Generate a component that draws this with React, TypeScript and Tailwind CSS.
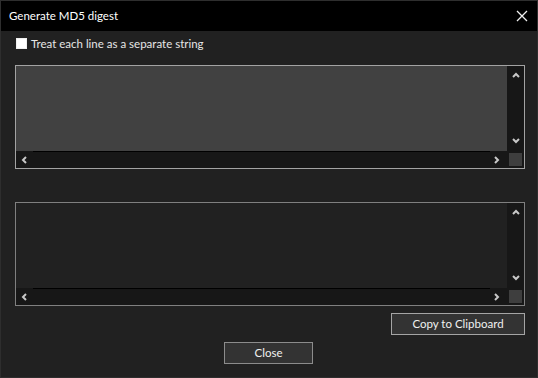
import React from "react";

type ArrowDir = "up" | "down" | "left" | "right";

const Chevron = ({ dir }: { dir: ArrowDir }) => {
    const points: Record<ArrowDir, string> = {
        up: "1,5 4,2 7,5",
        down: "1,2 4,5 7,2",
        left: "5,1 2,4 5,7",
        right: "2,1 5,4 2,7",
    };
    return (
        <svg width="8" height="8" viewBox="0 0 8 8" className="block">
            <polyline points={points[dir]} fill="none" stroke="#c8c8c8" strokeWidth="2" />
        </svg>
    );
};

type TextBoxProps = {
    filled?: boolean;
};

const ScrollTextBox = ({ filled }: TextBoxProps) => {
    return (
        <div className={`w-[510px] h-[104px] border flex flex-col ${filled ? "border-[#a3a3a3]" : "border-[#808080]"}`}>
            <div className="flex flex-1">
                {/* text area */}
                <div className={`flex-1 ${filled ? "bg-[#414141]" : "bg-[#212121]"}`} />
                {/* vertical scrollbar */}
                <div className="w-[17px] bg-[#171717] flex flex-col items-center justify-between py-[6px]">
                    <Chevron dir="up" />
                    <Chevron dir="down" />
                </div>
            </div>
            {/* horizontal scrollbar */}
            <div className="h-[17px] flex">
                <div className="flex-1 bg-[#171717] flex items-center relative">
                    <div className="absolute left-[17px] right-[17px] top-0 h-px bg-black" />
                    <div className="pl-[5px]"><Chevron dir="left" /></div>
                    <div className="flex-1" />
                    <div className="pr-[6px]"><Chevron dir="right" /></div>
                </div>
                <div className="w-[17px] bg-[#171717] p-[2px]">
                    <div className="w-full h-full bg-[#3e3e3e]" />
                </div>
            </div>
        </div>
    );
};

const App = () => {
    return (
        <div
            className="w-[538px] h-[378px] border border-[#2e2e2e] bg-[#212121] flex flex-col text-[11.5px] text-[#e6e6e6]"
            style={{ fontFamily: '"Segoe UI", Lato, "Liberation Sans", sans-serif' }}
        >
            {/* -----TITLE BAR----- */}
            <div className="h-[30px] bg-black flex items-center justify-between pl-[8px] pr-[9px] shrink-0">
                <span className="text-white text-[11.5px]">Generate MD5 digest</span>
                <svg width="12" height="12" viewBox="0 0 12 12">
                    <path d="M1 1 L11 11 M11 1 L1 11" stroke="#f0f0f0" strokeWidth="1.3" />
                </svg>
            </div>

            <div className="flex flex-col pl-[14px]">
                {/* -----CHECKBOX----- */}
                <label className="flex items-center gap-[4px] mt-[6px] ml-[1px] h-[13px]">
                    <span className="w-[11px] h-[11px] bg-white border border-[#f0f0f0]" />
                    <span className="leading-none">Treat each line as a separate string</span>
                </label>

                <div className="mt-[15px]">
                    <ScrollTextBox filled />
                </div>

                <div className="mt-[33px]">
                    <ScrollTextBox />
                </div>

                {/* -----BUTTONS----- */}
                <div className="flex justify-end mt-[7px] pr-[12px]">
                    <button className="w-[134px] h-[22px] bg-[#333333] border border-[#a5a5a5] text-[#f0f0f0] leading-none">
                        Copy to Clipboard
                    </button>
                </div>
                <div className="flex mt-[7px] pl-[209px]">
                    <button className="w-[89px] h-[22px] bg-[#333333] border border-[#8c8c8c] text-[#f0f0f0] leading-none">
                        Close
                    </button>
                </div>
            </div>
        </div>
    );
};

export default App;
